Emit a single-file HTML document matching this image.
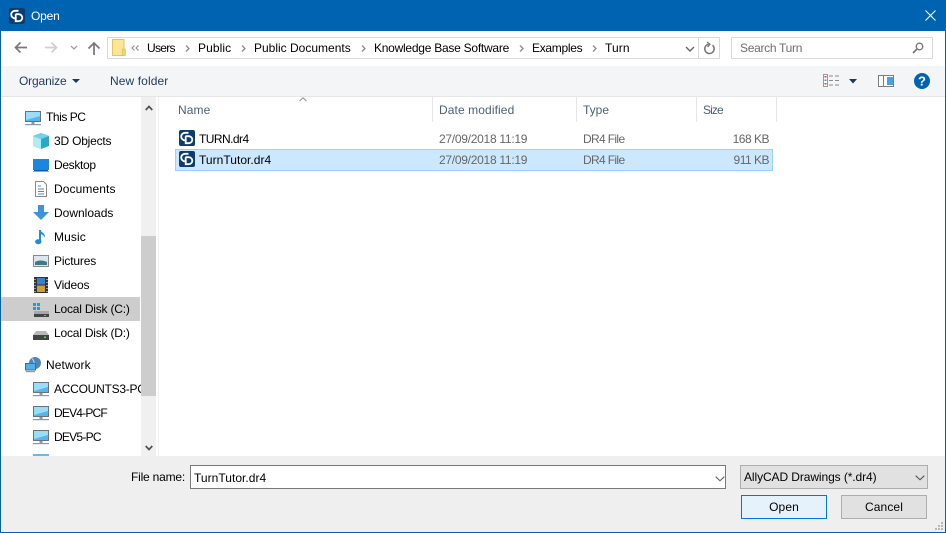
<!DOCTYPE html>
<html><head><meta charset="utf-8"><style>
html,body{margin:0;padding:0;width:946px;height:533px;overflow:hidden;background:#fff}
body{font-family:"Liberation Sans",sans-serif;font-size:12px;color:#000;position:relative}
.a{position:absolute;white-space:nowrap}
.t{position:absolute;white-space:nowrap;line-height:16px;height:16px}
.g{color:#666}
.h{color:#4c607a}
svg{position:absolute;overflow:visible}
</style></head><body>
<svg width="0" height="0" style="position:absolute"><defs>
<symbol id="logo" viewBox="0 0 16 16"><rect width="16" height="16" rx="2" fill="#0f3c70"/><path d="M9.500 2.800H6a3.800 3.800 0 0 0 0 7.600h1.600" fill="none" stroke="#fff" stroke-width="1.800"/><path d="M6.500 6.200h3.300a3.500 3.500 0 0 1 0 7H6.700V6.200" fill="none" stroke="#fff" stroke-width="1.800"/></symbol>
<symbol id="pc" viewBox="0 0 16 16"><rect x="0.500" y="1.500" width="15" height="10" fill="#55b5f2" stroke="#66727e" stroke-width="1"/><path d="M1 2h14v4L1 10z" fill="#9adcfb"/><rect x="6.500" y="12" width="3" height="2" fill="#8b98a5"/><rect x="0" y="14" width="16" height="1.200" fill="#8b98a5"/></symbol>
</defs></svg>

<!-- Frame & title -->
<div class="a" style="left:0;top:0;width:946px;height:31px;background:#0063b1"></div>
<div class="a" style="left:0;top:0;width:1px;height:533px;background:#0063b1;z-index:5"></div>
<div class="a" style="left:945px;top:0;width:1px;height:533px;background:#0063b1;z-index:5"></div>
<div class="a" style="left:0;top:532px;width:946px;height:1px;background:#0063b1;z-index:5"></div>
<svg style="left:9px;top:8px" width="16" height="16"><use href="#logo"/></svg>
<div class="t" style="left:31px;top:8px;color:#fff;letter-spacing:-.2px">Open</div>
<svg style="left:925px;top:10px" width="11" height="11"><path d="M.5.500l10 10M10.500.500l-10 10" stroke="#fff" stroke-width="1.100" fill="none"/></svg>

<!-- Nav -->
<svg style="left:14px;top:41px" width="14" height="13"><path d="M13 6.500H2M6.500 1.500l-5 5 5 5" stroke="#7a7a7a" stroke-width="1.700" fill="none"/></svg>
<svg style="left:44px;top:41px" width="14" height="13"><path d="M1 6.500h11M7.500 1.500l5 5-5 5" stroke="#d0d0d0" stroke-width="1.700" fill="none"/></svg>
<svg style="left:70px;top:45px" width="8" height="5"><path d="M1 1l3 3 3-3" stroke="#a0a0a0" stroke-width="1.300" fill="none"/></svg>
<svg style="left:87px;top:41px" width="14" height="14"><path d="M7 14V2M1.500 7.500L7 2l5.500 5.500" stroke="#7a7a7a" stroke-width="1.800" fill="none"/></svg>
<div class="a" style="left:107px;top:37px;width:611px;height:20px;border:1px solid #d9d9d9"></div>
<div class="a" style="left:698px;top:38px;width:1px;height:20px;background:#d9d9d9"></div>
<svg style="left:112px;top:39px" width="14" height="17"><path d="M.5.500h11.500v16H.5z" fill="#fde796" stroke="#e5c365"/><rect x="10.500" y="10" width="3" height="6.500" fill="#f5d36e" stroke="#e0b94f" stroke-width=".6"/></svg>
<svg style="left:131px;top:45px" width="9" height="6"><path d="M3.500.500L1 3l2.500 2.500M7.500.500L5 3l2.500 2.500" stroke="#8a8a8a" fill="none"/></svg>
<div class="t" style="left:147px;top:40px;letter-spacing:-.7px">Users</div>
<div class="t" style="left:198px;top:40px;letter-spacing:.1px">Public</div>
<div class="t" style="left:254px;top:40px;letter-spacing:0">Public Documents</div>
<div class="t" style="left:374px;top:40px;letter-spacing:-.25px">Knowledge Base Software</div>
<div class="t" style="left:532px;top:40px;letter-spacing:-.3px">Examples</div>
<div class="t" style="left:605px;top:40px;letter-spacing:.1px">Turn</div>
<svg style="left:185px;top:45px" width="5" height="7"><path d="M1 .5L4 3.500 1 6.500" stroke="#8a8a8a" stroke-width="1.300" fill="none"/></svg>
<svg style="left:241px;top:45px" width="5" height="7"><path d="M1 .5L4 3.500 1 6.500" stroke="#8a8a8a" stroke-width="1.300" fill="none"/></svg>
<svg style="left:361px;top:45px" width="5" height="7"><path d="M1 .5L4 3.500 1 6.500" stroke="#8a8a8a" stroke-width="1.300" fill="none"/></svg>
<svg style="left:519px;top:45px" width="5" height="7"><path d="M1 .5L4 3.500 1 6.500" stroke="#8a8a8a" stroke-width="1.300" fill="none"/></svg>
<svg style="left:592px;top:45px" width="5" height="7"><path d="M1 .5L4 3.500 1 6.500" stroke="#8a8a8a" stroke-width="1.300" fill="none"/></svg>
<svg style="left:685px;top:46px" width="10" height="6"><path d="M1 1l4 4 4-4" stroke="#666" stroke-width="1.400" fill="none"/></svg>
<svg style="left:703px;top:42px" width="13" height="13"><path d="M9.500 3.200a4.700 4.700 0 1 1-4-1" stroke="#777" stroke-width="1.500" fill="none"/><path d="M4 0l3 2.300L4.500 5" stroke="#777" stroke-width="1.300" fill="none"/></svg>
<div class="a" style="left:731px;top:37px;width:200px;height:20px;border:1px solid #d9d9d9"></div>
<div class="t g" style="left:740px;top:40px;letter-spacing:-.3px;color:#6d6d6d">Search Turn</div>
<svg style="left:912px;top:42px" width="12" height="12"><circle cx="7.500" cy="4.500" r="3.300" stroke="#777" stroke-width="1.300" fill="none"/><path d="M5 7L1 11" stroke="#777" stroke-width="1.800"/></svg>

<!-- Toolbar -->
<div class="a" style="left:1px;top:66px;width:944px;height:30px;background:#f4f5f7"></div>
<div class="a" style="left:1px;top:96px;width:944px;height:1px;background:#e6e6e6"></div>
<div class="t" style="left:19px;top:73px;color:#1e395b;letter-spacing:-.15px">Organize</div>
<svg style="left:72px;top:79px" width="8" height="4"><path d="M0 0h8L4 4z" fill="#1e395b"/></svg>
<div class="t" style="left:110px;top:73px;color:#1e395b;letter-spacing:.1px">New folder</div>
<svg style="left:823px;top:74px" width="17" height="13"><rect x=".5" y=".5" width="4" height="12" fill="#fff" stroke="#9a9a9a"/><rect x="1.500" y="2" width="2" height="1.500" fill="#c44"/><rect x="1.500" y="5.500" width="2" height="1.500" fill="#58a"/><rect x="1.500" y="9" width="2" height="1.500" fill="#c44"/><path d="M6 2h4M12 2h4M6 6.500h4M12 6.500h4M6 11h4M12 11h4" stroke="#8a8a8a"/></svg>
<svg style="left:849px;top:79px" width="8" height="5"><path d="M0 0h8L4 4.500z" fill="#1e395b"/></svg>
<svg style="left:878px;top:75px" width="16" height="12"><rect x=".5" y=".5" width="15" height="11" fill="#fff" stroke="#7d7d7d"/><rect x="5" y="1" width="1" height="10" fill="#7d7d7d"/><rect x="9" y="2" width="6" height="8" fill="#4a9fe5"/></svg>
<svg style="left:914px;top:73px" width="16" height="16"><circle cx="8" cy="8" r="8" fill="#0063b1"/><text x="8" y="12.500" font-family="Liberation Sans" font-size="13" font-weight="bold" fill="#fff" text-anchor="middle">?</text></svg>

<!-- Sidebar -->
<svg style="left:25px;top:110px" width="16" height="16"><use href="#pc"/></svg>
<div class="t" style="left:46px;top:109px;letter-spacing:-.45px">This PC</div>
<svg style="left:33px;top:133px" width="16" height="16"><path d="M8 0l8 3v10l-8 3-8-3V3z" fill="#2aa8c8"/><path d="M0 3l8 3v10l-8-3z" fill="#b0ecf0"/><path d="M8 0l8 3-8 3-8-3z" fill="#70d4e4"/></svg>
<div class="t" style="left:54px;top:133px;letter-spacing:-.2px">3D Objects</div>
<svg style="left:33px;top:159px" width="16" height="13"><rect width="16" height="12" fill="#1a86dc"/><rect y="11" width="16" height="1.500" fill="#0b5ca8"/><path d="M0 11.500h1M15 11.500h1" stroke="#fff"/></svg>
<div class="t" style="left:54px;top:157px;letter-spacing:-.33px">Desktop</div>
<svg style="left:35px;top:181px" width="12" height="16"><path d="M.5.500h8l3 3v12H.5z" fill="#fff" stroke="#8a8a8a"/><path d="M3 5h3M3 8h6M3 10.500h6M3 13h6" stroke="#4a8cc8"/></svg>
<div class="t" style="left:54px;top:181px;letter-spacing:.1px">Documents</div>
<svg style="left:33px;top:205px" width="16" height="15"><path d="M5 0h6v7h5l-8 8-8-8h5z" fill="#3f93dd"/></svg>
<div class="t" style="left:54px;top:205px;letter-spacing:0">Downloads</div>
<svg style="left:35px;top:229px" width="12" height="16"><path d="M5 1v11" stroke="#1f8ce0" stroke-width="2"/><ellipse cx="3.300" cy="12.700" rx="3.200" ry="2.500" fill="#1f8ce0"/><path d="M5.500 1c1 3 5 3 4.500 8-.5-2-2.500-3.500-4.500-4z" fill="#1f8ce0"/></svg>
<div class="t" style="left:54px;top:229px;letter-spacing:.1px">Music</div>
<svg style="left:33px;top:255px" width="16" height="12"><rect x=".5" y=".5" width="15" height="11" fill="#dbe6ee" stroke="#888"/><path d="M2 7c3-2 8-2 12 0v3H2z" fill="#3f7a84"/></svg>
<div class="t" style="left:54px;top:253px;letter-spacing:-.15px">Pictures</div>
<svg style="left:34px;top:277px" width="14" height="16"><rect width="14" height="16" fill="#333"/><rect x="3" y="1" width="8" height="6.500" fill="#3b7fc4"/><rect x="3" y="8.500" width="8" height="6.500" fill="#c9a13b"/><path d="M1 2v1M1 5v1M1 8v1M1 11v1M1 14v1M13 2v1M13 5v1M13 8v1M13 11v1M13 14v1" stroke="#fff"/></svg>
<div class="t" style="left:54px;top:277px;letter-spacing:-.2px">Videos</div>
<div class="a" style="left:1px;top:297px;width:139px;height:24px;background:#cdcdcd"></div>
<svg style="left:33px;top:303px" width="16" height="14"><path d="M0 0h3v3H0zM4 0h3v3H4zM0 4h3v3H0zM4 4h3v3H4z" fill="#1f9ce0"/><rect x="1" y="8" width="15" height="3" fill="#a8a8a8"/><rect x="1" y="11" width="15" height="3" fill="#444"/><rect x="11" y="12" width="2" height="1" fill="#4d4"/></svg>
<div class="t" style="left:54px;top:301px;letter-spacing:-.2px">Local Disk (C:)</div>
<svg style="left:33px;top:331px" width="16" height="9"><path d="M3 0h10l3 4H0z" fill="#b8b8b8"/><rect y="4" width="16" height="5" fill="#444"/><rect x="11" y="5.500" width="2" height="1.500" fill="#4d4"/></svg>
<div class="t" style="left:54px;top:325px;letter-spacing:-.2px">Local Disk (D:)</div>
<svg style="left:25px;top:357px" width="16" height="16"><circle cx="10" cy="6" r="6" fill="#4e86b8"/><path d="M7 1.500c2 2 3 5 2 9" stroke="#bcd8ec" fill="none"/><rect x="0.500" y="6.500" width="10" height="6.500" fill="#4fb0ee" stroke="#56687a"/><rect x="1" y="14" width="9" height="1.200" fill="#8b98a5"/></svg>
<div class="t" style="left:46px;top:357px;letter-spacing:.1px">Network</div>
<svg style="left:33px;top:381px" width="16" height="16"><use href="#pc"/></svg>
<div class="t" style="left:54px;top:381px;width:87px;overflow:hidden;letter-spacing:-.25px">ACCOUNTS3-PC</div>
<svg style="left:33px;top:405px" width="16" height="16"><use href="#pc"/></svg>
<div class="t" style="left:54px;top:405px;letter-spacing:-.8px">DEV4-PCF</div>
<svg style="left:33px;top:429px" width="16" height="16"><use href="#pc"/></svg>
<div class="t" style="left:54px;top:429px;letter-spacing:-.75px">DEV5-PC</div>
<div class="a" style="left:33px;top:454px;width:16px;height:2px;background:#6ab8ea"></div>

<!-- Scrollbar -->
<div class="a" style="left:141px;top:97px;width:15px;height:359px;background:#f0f0f0"></div>
<div class="a" style="left:141px;top:236px;width:15px;height:160px;background:#cdcdcd"></div>
<svg style="left:145px;top:105px" width="8" height="6"><path d="M.7 5L4 1.500 7.300 5" stroke="#505050" stroke-width="1.700" fill="none"/></svg>
<svg style="left:145px;top:445px" width="8" height="6"><path d="M.7 1L4 4.500 7.300 1" stroke="#505050" stroke-width="1.700" fill="none"/></svg>
<div class="a" style="left:158px;top:97px;width:1px;height:359px;background:#efefef"></div>

<!-- List header -->
<svg style="left:299px;top:97px" width="8" height="5"><path d="M.5 4L4 .8 7.500 4" stroke="#8a8a8a" fill="none"/></svg>
<div class="a" style="left:432px;top:97px;width:1px;height:25px;background:#e5e5e5"></div>
<div class="a" style="left:576px;top:97px;width:1px;height:25px;background:#e5e5e5"></div>
<div class="a" style="left:696px;top:97px;width:1px;height:25px;background:#e5e5e5"></div>
<div class="a" style="left:776px;top:97px;width:1px;height:25px;background:#e5e5e5"></div>
<div class="t h" style="left:178px;top:102px;letter-spacing:.1px">Name</div>
<div class="t h" style="left:439px;top:102px;letter-spacing:.1px">Date modified</div>
<div class="t h" style="left:583px;top:102px;letter-spacing:0">Type</div>
<div class="t h" style="left:703px;top:102px;letter-spacing:-.9px">Size</div>

<!-- Rows -->
<div class="a" style="left:175px;top:149px;width:596px;height:20px;background:#cce8ff;border:1px solid #99d1ff"></div>
<svg style="left:179px;top:130px" width="16" height="16"><use href="#logo"/></svg>
<div class="t" style="left:199px;top:131px;letter-spacing:-.55px">TURN.dr4</div>
<div class="t g" style="left:439px;top:131px;letter-spacing:-.27px">27/09/2018 11:19</div>
<div class="t g" style="left:583px;top:131px;letter-spacing:-.65px">DR4 File</div>
<div class="t g" style="left:710px;top:131px;width:59px;text-align:right;letter-spacing:-.5px">168 KB</div>
<svg style="left:179px;top:151px" width="16" height="16"><use href="#logo"/></svg>
<div class="t" style="left:199px;top:152px;letter-spacing:.03px">TurnTutor.dr4</div>
<div class="t g" style="left:439px;top:152px;letter-spacing:-.27px">27/09/2018 11:19</div>
<div class="t g" style="left:583px;top:152px;letter-spacing:-.65px">DR4 File</div>
<div class="t g" style="left:710px;top:152px;width:59px;text-align:right;letter-spacing:-.5px">911 KB</div>

<!-- Bottom -->
<div class="a" style="left:1px;top:456px;width:944px;height:76px;background:#efefef"></div>
<div class="t" style="left:131px;top:469px;letter-spacing:-.2px">File name:</div>
<div class="a" style="left:190px;top:465px;width:534px;height:22px;background:#fff;border:1px solid #7a7a7a"></div>
<div class="t" style="left:194px;top:470px;letter-spacing:.03px">TurnTutor.dr4</div>
<svg style="left:715px;top:476px" width="10" height="6"><path d="M.7.700L5 4.800 9.300.700" stroke="#666" stroke-width="1.100" fill="none"/></svg>
<div class="a" style="left:740px;top:465px;width:186px;height:22px;background:#e1e1e1;border:1px solid #adadad"></div>
<div class="t" style="left:744px;top:469px;letter-spacing:-.09px">AllyCAD Drawings (*.dr4)</div>
<svg style="left:915px;top:475px" width="10" height="6"><path d="M.7.700L5 4.800 9.300.700" stroke="#555" stroke-width="1.100" fill="none"/></svg>
<div class="a" style="left:741px;top:495px;width:84px;height:22px;background:#e5f1fb;border:1px solid #0078d7"></div>
<div class="t" style="left:741px;top:499px;width:86px;text-align:center;letter-spacing:.1px">Open</div>
<div class="a" style="left:841px;top:495px;width:84px;height:22px;background:#e1e1e1;border:1px solid #adadad"></div>
<div class="t" style="left:841px;top:499px;width:86px;text-align:center;letter-spacing:.1px">Cancel</div>
<svg style="left:934px;top:521px" width="10" height="10"><path d="M7 1h2v2H7zM4 4h2v2H4zM7 4h2v2H7zM1 7h2v2H1zM4 7h2v2H4zM7 7h2v2H7z" fill="#b8b8b8"/></svg>
</body></html>
